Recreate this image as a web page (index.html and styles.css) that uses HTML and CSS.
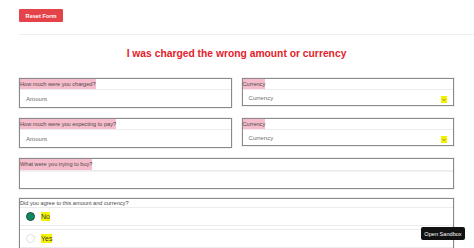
FILE: index.html
```html
<!DOCTYPE html>
<html>
<head>
<meta charset="utf-8">
<link rel="stylesheet" href="styles.css">
</head>
<body>
<div class="page">
  <button class="reset">Reset Form</button>
  <div class="rule"></div>
  <h1 class="title">I was charged the wrong amount or currency</h1>

  <div class="row">
    <div class="field">
      <div class="label"><span class="hl">How much were you charged?</span></div>
      <div class="input">Amount</div>
    </div>
    <div class="field select">
      <div class="label"><span class="hl">Currency</span></div>
      <div class="input"><span>Currency</span><span class="chev"><svg viewBox="0 0 6 7" width="6" height="7"><path d="M1.6 3.2 L3 4.6 L4.4 3.2" fill="none" stroke="#555" stroke-width="0.7"/></svg></span></div>
    </div>
  </div>

  <div class="row">
    <div class="field">
      <div class="label"><span class="hl">How much were you expecting to pay?</span></div>
      <div class="input">Amount</div>
    </div>
    <div class="field select">
      <div class="label"><span class="hl">Currency</span></div>
      <div class="input"><span>Currency</span><span class="chev"><svg viewBox="0 0 6 7" width="6" height="7"><path d="M1.6 3.2 L3 4.6 L4.4 3.2" fill="none" stroke="#555" stroke-width="0.7"/></svg></span></div>
    </div>
  </div>

  <div class="field wide">
    <div class="label tall"><span class="hl">What were you trying to buy?</span></div>
    <div class="input area"></div>
  </div>

  <div class="field radios">
    <div class="legend">Did you agree to this amount and currency?</div>
    <div class="option"><span class="radio checked"></span><span class="opt">No</span></div>
    <div class="option"><span class="radio"></span><span class="opt">Yes</span></div>
  </div>
</div>
<div class="sandbox">Open Sandbox</div>
</body>
</html>
```

FILE: styles.css
```css
html, body {
  margin: 0;
  padding: 0;
  background: #fff;
  font-family: "Liberation Sans", Arial, sans-serif;
  overflow: hidden;
}
.page {
  padding: 9px 20px 0 19px;
}
.reset {
  display: block;
  width: 44px;
  height: 13px;
  padding: 0;
  border: 0;
  border-radius: 1px;
  background: #e5434a;
  color: #fff;
  font-family: "Liberation Sans", Arial, sans-serif;
  font-weight: bold;
  font-size: 5.6px;
}
.rule {
  height: 1px;
  background: #efefef;
  margin: 12px -20px 0 0;
}
.title {
  margin: 13px 0 18px;
  text-align: center;
  color: #e3222b;
  font-size: 10.3px;
  line-height: 12px;
  font-weight: bold;
}
.row {
  display: grid;
  grid-template-columns: 1fr 1fr;
  column-gap: 10px;
  align-items: start;
  margin-bottom: 10px;
}
.field {
  border: 1px solid #8a8a8a;
  background: #fff;
  box-shadow: 0 0 0 0.5px rgba(0, 0, 0, 0.12);
}
.label {
  height: 10px;
  border-bottom: 1px solid #ececec;
  font-size: 5.6px;
  line-height: 10px;
  color: #4a4a4a;
}
.label.tall {
  height: 11px;
  line-height: 11px;
}
.hl {
  display: inline-block;
  background: #f6bccb;
  height: 100%;
  vertical-align: top;
}
.input {
  height: 17px;
  padding: 0 6px;
  display: flex;
  align-items: center;
  font-size: 6.1px;
  color: #6f6f6f;
}
.input.area {
  box-shadow: inset 0 3px 0 -2px #f1f1f1;
}
.select .input {
  height: 15px;
  justify-content: space-between;
  align-items: center;
}
.chev {
  align-self: flex-end;
  margin-bottom: 2px;
  margin-right: 0;
  width: 6px;
  height: 7px;
  background: #f5f000;
  display: flex;
}
.wide {
  margin-bottom: 9px;
}
.radios {
  border-bottom: 0;
  height: 60px;
}
.legend {
  height: 8px;
  line-height: 8px;
  font-size: 5.6px;
  color: #4a4a4a;
  border-bottom: 1px solid #ececec;
}
.option {
  height: 17px;
  border-bottom: 1px solid #ececec;
  display: flex;
  align-items: center;
  padding-left: 6px;
  gap: 6px;
}
.option + .option {
  margin-top: 3px;
  border-top: 1px solid #ececec;
}
.radio {
  box-sizing: border-box;
  width: 9px;
  height: 9px;
  border-radius: 50%;
  border: 1px solid #e2e2e2;
  background: #fff;
}
.radio.checked {
  border: 1.5px solid #1e4a3c;
  background: #0b8a64;
}
.opt {
  background: #f7f300;
  color: #3a3a3a;
  font-size: 7px;
  line-height: 9px;
}
.sandbox {
  position: fixed;
  right: 9px;
  bottom: 8px;
  width: 44px;
  height: 13px;
  border-radius: 2px;
  background: #111;
  color: #fff;
  font-size: 5.6px;
  display: flex;
  align-items: center;
  justify-content: center;
}
```
